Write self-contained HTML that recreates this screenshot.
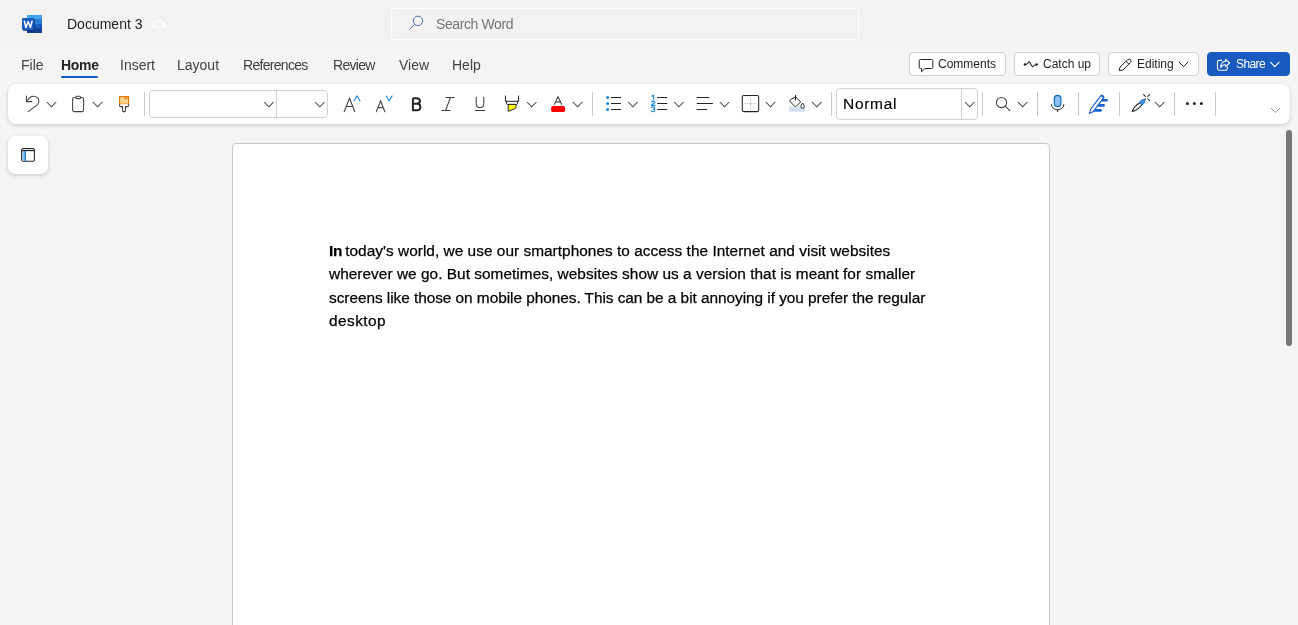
<!DOCTYPE html>
<html><head><meta charset="utf-8">
<style>
*{margin:0;padding:0;box-sizing:border-box;}
html,body{width:1298px;height:625px;overflow:hidden;background:#f5f5f5;font-family:"Liberation Sans",sans-serif;color:#242424;}
#titlebar{position:absolute;left:0;top:0;width:1298px;height:48px;background:#f3f2f1;}
#search{position:absolute;left:391px;top:8px;width:468px;height:32px;border:1px solid #fff;border-radius:3px;background:#f3f2f1;}
.t{position:absolute;white-space:nowrap;line-height:1;}
.tab{position:absolute;top:57.6px;font-size:14px;color:#424242;white-space:nowrap;line-height:1;}
.btn{position:absolute;top:52px;height:24px;border:1px solid #d1d1d1;border-radius:4px;background:#fff;}
.bt{position:absolute;top:57.8px;font-size:12px;color:#242424;white-space:nowrap;line-height:1;}
#toolbar{position:absolute;left:8px;top:84px;width:1282px;height:40px;background:#fff;border-radius:8px;box-shadow:0 2px 4px rgba(0,0,0,0.12),0 0 2px rgba(0,0,0,0.10);}
#leftbtn{position:absolute;left:8px;top:136px;width:40px;height:38px;background:#fff;border-radius:7px;box-shadow:0 2px 4px rgba(0,0,0,0.12),0 0 2px rgba(0,0,0,0.10);}
.box{position:absolute;border:1px solid #d1d1d1;border-radius:4px;background:#fff;}
#page{position:absolute;left:232px;top:143px;width:818px;height:500px;background:#fff;border:1px solid #c8c8c8;border-radius:4px 4px 0 0;}
.line{position:absolute;left:329px;font-size:15.4px;color:#000;white-space:nowrap;line-height:1;-webkit-text-stroke:0.25px #000;}
#scroll{position:absolute;left:1286px;top:130px;width:6px;height:216px;border-radius:3px;background:#797775;}
svg#ov{position:absolute;left:0;top:0;width:1298px;height:625px;}
.t,.tab,.bt,.line{will-change:transform;}
</style></head><body>
<div id="titlebar"></div>
<div id="search"></div>
<div class="t" style="left:67px;top:17px;font-size:14px;color:#242424;">Document 3</div>
<div class="t" style="left:436px;top:17.3px;font-size:14px;color:#767676;letter-spacing:-0.4px;">Search Word</div>

<div class="tab" style="left:21px;">File</div>
<div class="tab" style="left:61px;font-weight:bold;color:#242424;letter-spacing:-0.3px;">Home</div>
<div class="tab" style="left:120px;">Insert</div>
<div class="tab" style="left:177px;">Layout</div>
<div class="tab" style="left:243px;letter-spacing:-0.7px;">References</div>
<div class="tab" style="left:333px;letter-spacing:-0.7px;">Review</div>
<div class="tab" style="left:399px;">View</div>
<div class="tab" style="left:452px;">Help</div>
<div style="position:absolute;left:61.3px;top:75.6px;width:36.6px;height:2.1px;border-radius:1px;background:#185abd;"></div>

<div class="btn" style="left:909px;width:97px;"></div>
<div class="btn" style="left:1014px;width:86px;"></div>
<div class="btn" style="left:1108px;width:91px;"></div>
<div class="btn" style="left:1207px;width:83px;border-color:#185abd;background:#185abd;"></div>
<div class="bt" style="left:938px;">Comments</div>
<div class="bt" style="left:1043px;">Catch up</div>
<div class="bt" style="left:1137px;">Editing</div>
<div class="bt" style="left:1236px;color:#fff;letter-spacing:-0.6px;">Share</div>

<div id="toolbar"></div>
<div class="box" style="left:149px;top:90px;width:179px;height:28px;"></div>
<div style="position:absolute;left:276px;top:91px;width:1px;height:26px;background:#d1d1d1;"></div>
<div class="box" style="left:836px;top:88px;width:142px;height:32px;"></div>
<div style="position:absolute;left:961px;top:89px;width:1px;height:30px;background:#d1d1d1;"></div>
<div class="t" style="left:843px;top:95.8px;font-size:15.5px;color:#000;letter-spacing:0.7px;-webkit-text-stroke:0.15px #000;">Normal</div>

<div id="leftbtn"></div>
<div id="page"></div>
<div id="scroll"></div>

<div class="line" style="top:243px;letter-spacing:0.03px"><b style="letter-spacing:-0.3px;margin-right:-1.2px">In</b> today's world, we use our smartphones to access the Internet and visit websites</div>
<div class="line" style="top:266px;letter-spacing:0.035px">wherever we go. But sometimes, websites show us a version that is meant for smaller</div>
<div class="line" style="top:290px;letter-spacing:-0.045px">screens like those on mobile phones. This can be a bit annoying if you prefer the regular</div>
<div class="line" style="top:313px;letter-spacing:0.45px">desktop</div>

<svg id="ov" viewBox="0 0 1298 625">
<!-- word logo -->
<g>
 <rect x="27" y="15" width="15" height="18" rx="1.2" fill="#185abd"/>
 <rect x="27" y="15" width="15" height="4.5" fill="#41a5ee"/>
 <rect x="27" y="19.5" width="15" height="4.5" fill="#2b7cd3"/>
 <rect x="27" y="24" width="15" height="4.5" fill="#185abd"/>
 <rect x="27" y="28.5" width="15" height="4.5" fill="#103f91"/>
 <rect x="23" y="19" width="12" height="12" rx="1" fill="#0b2d6e" opacity="0.75"/>
 <rect x="22" y="18" width="12.2" height="12" rx="1" fill="#185abd"/>
 <path d="M24.2,20.6 L25.9,27.6 L28.2,21.6 L30.4,27.6 L32.2,20.6" fill="none" stroke="#fff" stroke-width="1.5" stroke-linejoin="round"/>
</g>
<!-- cloud -->
<path d="M153,27 H165 V24.6 Q165,23.6 164,23.6 H162.6 V21.6 Q162.6,20.7 161.7,20.7 H158 Q156.6,20.7 155.6,21.8 L154.2,22.8 Q153,23.4 153,24.6 Z" fill="none" stroke="#fff" stroke-width="1.2" stroke-linejoin="round"/>
<!-- search icon -->
<circle cx="418" cy="20.9" r="4.7" fill="none" stroke="#4f6bb0" stroke-width="0.95"/>
<path d="M414.7,24.3 L409.3,29.7" stroke="#4f6bb0" stroke-width="0.95"/>

<!-- comments icon -->
<path d="M920.5,59.5 H931.5 A1.3,1.3 0 0 1 932.8,60.8 V67.2 A1.3,1.3 0 0 1 931.5,68.5 H925 L921.5,71.8 V68.5 H920.5 A1.3,1.3 0 0 1 919.2,67.2 V60.8 A1.3,1.3 0 0 1 920.5,59.5 Z" fill="none" stroke="#242424" stroke-width="1"/>
<!-- catch up icon -->
<path d="M1025,64.5 C1026.5,64.5 1027.3,64.2 1028,63 C1028.8,61.5 1029.6,61.5 1030.3,63.2 C1031,65 1031.6,66.6 1032.6,66.6 C1033.6,66.6 1034,64.5 1036.6,64.5" fill="none" stroke="#242424" stroke-width="1.1"/>
<circle cx="1025" cy="64.5" r="1.3" fill="#242424"/><circle cx="1036.6" cy="64.5" r="1.3" fill="#242424"/>
<!-- pencil -->
<path d="M1119.2,70.6 L1120,67 L1127.5,59.8 A1.6,1.6 0 0 1 1130.5,62.6 L1123,70 Z M1126,61.3 L1129,64.2" fill="none" stroke="#242424" stroke-width="1"/>
<path d="M1178.8,61.8 L1183.5,66.6 L1188.2,61.8" fill="none" stroke="#242424" stroke-width="1"/>
<!-- share icon -->
<path d="M1222,60.4 H1219 A1.6,1.6 0 0 0 1217.5,62 V68.6 A1.6,1.6 0 0 0 1219.1,70.2 H1225.8 A1.6,1.6 0 0 0 1227.4,68.6 V66.6" fill="none" stroke="#fff" stroke-width="1.1"/>
<path d="M1225.6,59.4 L1229.6,63 L1225.6,66.6 V64.8 C1223.2,64.8 1221.6,65.8 1220.7,67.4 C1220.9,64.2 1222.7,61.6 1225.6,61.3 Z" fill="none" stroke="#fff" stroke-width="1.1" stroke-linejoin="round"/>
<path d="M1270.2,61.8 L1274.8,66.6 L1279.4,61.8" fill="none" stroke="#fff" stroke-width="1.1"/>

<!-- toolbar separators -->
<g fill="#c8c8c8">
 <rect x="144" y="92" width="1" height="24"/>
 <rect x="592" y="92" width="1" height="24"/>
 <rect x="831" y="92" width="1" height="24"/>
 <rect x="982" y="92" width="1" height="24"/>
 <rect x="1037" y="92" width="1" height="24"/>
 <rect x="1078" y="92" width="1" height="24"/>
 <rect x="1119" y="92" width="1" height="24"/>
 <rect x="1174" y="92" width="1" height="24"/>
 <rect x="1215" y="92" width="1" height="24"/>
</g>
<!-- chevrons -->
<g fill="none" stroke="#424242" stroke-width="1.05">
 <path d="M46.8,102 L51.5,106.8 L56.2,102"/>
 <path d="M92.9,102 L97.6,106.8 L102.3,102"/>
 <path d="M264.2,102 L268.9,106.8 L273.6,102"/>
 <path d="M315.1,102 L319.8,106.8 L324.5,102"/>
 <path d="M527,102 L531.7,106.8 L536.4,102"/>
 <path d="M572.9,102 L577.6,106.8 L582.3,102"/>
 <path d="M628.2,102 L632.9,106.8 L637.6,102"/>
 <path d="M674.2,102 L678.9,106.8 L683.6,102"/>
 <path d="M719.8,102 L724.5,106.8 L729.2,102"/>
 <path d="M765.8,102 L770.5,106.8 L775.2,102"/>
 <path d="M812.1,102 L816.8,106.8 L821.5,102"/>
 <path d="M965,102 L969.7,106.8 L974.4,102"/>
 <path d="M1017.9,102 L1022.6,106.8 L1027.3,102"/>
 <path d="M1155,102 L1159.7,106.8 L1164.4,102"/>
</g>
<path d="M1271,108 L1275.5,112.6 L1280,108" fill="none" stroke="#8a8a8a" stroke-width="0.9"/>

<!-- undo -->
<g fill="none" stroke="#424242" stroke-width="1.05" stroke-linecap="round" stroke-linejoin="round">
 <path d="M26.4,96 V101.6 H31.8"/>
 <path d="M26.9,101.2 C28.6,98.1 30.9,96.2 33.5,96.2 C36.5,96.2 38.9,98.5 38.9,101.3 C38.9,102.8 38.2,104 37.2,104.8 L28.2,111.6"/>
</g>
<!-- clipboard -->
<g fill="none" stroke="#424242" stroke-width="1.05">
 <rect x="72.6" y="97.4" width="11" height="14.2" rx="1.6"/>
 <rect x="75.6" y="96.2" width="5" height="2.4" rx="1.2" fill="#fff"/>
</g>
<!-- format painter -->
<rect x="119.6" y="96.6" width="9" height="7.6" fill="#f7d98b" stroke="#e3730b" stroke-width="1.1"/>
<path d="M125,96.8 V99.6 M127,96.8 V99.6" stroke="#e3730b" stroke-width="1.1"/>
<path d="M119.6,104.2 V105.6 Q119.6,106.6 120.6,106.6 H122.6 V111 Q122.6,111.6 123.2,111.6 H124.8 Q125.4,111.6 125.4,111 V106.6 H127.6 Q128.6,106.6 128.6,105.6 V104.2" fill="#fff" stroke="#424242" stroke-width="1.05"/>

<!-- grow / shrink font -->
<g fill="none" stroke="#424242" stroke-width="1.05" stroke-linecap="round">
 <path d="M344.2,111.8 L349.5,98.2 L354.8,111.8 M346.3,106.5 H352.7"/>
 <path d="M376.3,111.8 L380.6,101 L384.9,111.8 M378,107.6 H383.2"/>
</g>
<g fill="none" stroke="#1a86d9" stroke-width="1.1" stroke-linecap="round">
 <path d="M354,100.8 L357,96 L360,100.8"/>
 <path d="M386.3,96 L389.2,100.8 L392.1,96"/>
</g>
<!-- bold B -->
<path d="M412.9,98.3 H416.5 C418.7,98.3 419.9,99.4 419.9,101 C419.9,102.6 418.7,103.8 416.5,103.8 H412.9 M412.9,103.8 H417 C419.3,103.8 420.4,105.1 420.4,107 C420.4,108.9 419.3,110.2 417,110.2 H412.9 Z M412.9,98.3 V110.2" fill="none" stroke="#242424" stroke-width="1.95" stroke-linejoin="round"/>
<!-- italic I -->
<path d="M445.5,97.5 H454.5 M441.5,110.5 H450.5 M450.5,97.5 L445.5,110.5" fill="none" stroke="#424242" stroke-width="1.05"/>
<!-- underline U -->
<path d="M476.2,96.8 V103.5 C476.2,106 477.8,107.6 480,107.6 C482.2,107.6 483.8,106 483.8,103.5 V96.8 M474.8,110.4 H485.2" fill="none" stroke="#424242" stroke-width="1.05"/>
<!-- highlighter -->
<g stroke="#242424" stroke-width="1" fill="none" stroke-linejoin="round">
 <path d="M505.4,95.6 V101.3 H518.6 V95.6"/>
 <path d="M506.4,101.3 V103.3 Q506.4,104.4 507.5,104.4 H516.5 Q517.6,104.4 517.6,103.3 V101.3"/>
 <path d="M508.2,104.4 V111.4 L515,108.6 Q515.8,108.2 515.9,107.4 L516.2,104.4 Z" fill="#ffff00"/>
</g>
<!-- font color -->
<path d="M554.2,104.8 L558,96.6 L561.8,104.8 M555.5,102 H560.5" fill="none" stroke="#242424" stroke-width="1"/>
<rect x="551.2" y="106" width="13.8" height="6" rx="1.5" fill="#ff0000"/>

<!-- bullets -->
<g fill="#1a86d9">
 <circle cx="607.6" cy="97.5" r="1.5"/><circle cx="607.6" cy="103.4" r="1.5"/><circle cx="607.6" cy="109.4" r="1.5"/>
</g>
<g stroke="#242424" stroke-width="1.05">
 <path d="M611,97.5 H621 M611,103.4 H621 M611,109.4 H621"/>
 <path d="M657.2,97.5 H667.2 M657.2,103.4 H667.2 M657.2,109.4 H667.2"/>
 <path d="M696.7,97.5 H709.4 M696.7,103.4 H712.9 M696.7,109.4 H707.1"/>
</g>
<g fill="none" stroke="#1a86d9" stroke-width="1.15" stroke-linejoin="round" stroke-linecap="round">
 <path d="M651.8,96.2 L653.6,95.3 V99.4"/>
 <path d="M651.5,102 C651.7,101.4 652.4,101.1 653.2,101.1 C654.1,101.1 654.9,101.6 654.9,102.3 C654.9,103.5 651.5,104 651.5,105.3 H655.1"/>
 <path d="M651.5,107.5 C651.8,107.1 652.4,106.9 653.1,106.9 C654.1,106.9 654.8,107.4 654.8,108.1 C654.8,108.8 654.1,109.2 653.2,109.2 C654.2,109.2 654.9,109.7 654.9,110.5 C654.9,111.3 654.1,111.7 653.1,111.7 C652.3,111.7 651.7,111.4 651.4,110.9"/>
</g>
<!-- borders -->
<rect x="742.3" y="95.4" width="16.4" height="16.2" rx="1.5" fill="none" stroke="#242424" stroke-width="1.05"/>
<path d="M750.5,97.5 V110 M744.5,103.5 H757" stroke="#8a8a8a" stroke-width="0.7" stroke-dasharray="1,1.2"/>
<!-- shading -->
<rect x="789" y="106.5" width="16" height="5.2" fill="#d5e0f5"/>
<g fill="none" stroke="#242424" stroke-width="1" stroke-linejoin="round">
 <path d="M795.5,96.8 L800.6,101.9 L796.6,105.9 Q795.5,107 794.4,105.9 L790.4,101.9 Q789.3,100.8 790.4,99.7 Z" fill="#fff"/>
 <path d="M795.5,95 V100.5"/>
 <path d="M802.6,103 C801.8,104.4 800.9,105.3 800.9,106.6 A1.7,1.7 0 0 0 804.3,106.6 C804.3,105.3 803.4,104.4 802.6,103 Z" fill="#fff"/>
</g>

<!-- find -->
<g fill="none" stroke="#424242" stroke-width="1.05" stroke-linecap="round">
 <circle cx="1001.5" cy="102.5" r="5.1"/>
 <path d="M1005.2,106.2 L1009.8,110.6"/>
</g>
<!-- mic -->
<rect x="1054.3" y="95.3" width="6.6" height="11.3" rx="3.3" fill="#8cc0f0" stroke="#0f6cbd" stroke-width="1.2"/>
<path d="M1051.3,104.2 C1051.6,107.6 1054.3,109.8 1057.6,109.8 C1060.9,109.8 1063.6,107.6 1063.9,104.2" fill="none" stroke="#242424" stroke-width="1"/>
<path d="M1057.6,109.8 V112" stroke="#242424" stroke-width="1"/>
<!-- editor -->
<g stroke="#1c5fd0" stroke-width="2.6" stroke-linecap="round">
 <path d="M1099.8,100.2 H1106.6 M1096.6,105.4 H1103.6 M1093.4,110.4 H1100.6"/>
</g>
<path d="M1089.4,113.6 L1090.6,109.4 L1101.2,95.1 L1104,97.2 L1093.4,111.4 Z" fill="#fff" stroke="#1c5fd0" stroke-width="1.1" stroke-linejoin="round"/>
<path d="M1101.8,95.6 L1103.6,96.9" stroke="#1c5fd0" stroke-width="2"/>
<!-- designer pen -->
<g fill="none" stroke="#242424" stroke-width="1.05" stroke-linecap="round">
 <path d="M1143.6,94.6 L1145.4,96.4 M1147.8,98.8 L1149.6,100.6 M1149.6,94.6 L1147.8,96.4 M1145.4,98.8 L1143.6,100.6"/>
 <path d="M1132.3,111.6 C1133.2,108.6 1136.5,104.6 1140,102.8 L1141.8,104.6 C1140,108 1135.4,111 1132.3,111.6 Z" fill="#fff"/>
</g>
<path d="M1139.4,102.4 C1140.2,100.6 1142.4,99.4 1145.1,99.3 C1145,101.9 1143.9,104.2 1142.1,105 Z" fill="#3d97e0" stroke="#1a6fc0" stroke-width="0.9" stroke-linejoin="round"/>
<!-- more -->
<g fill="#242424"><circle cx="1187.4" cy="103.5" r="1.5"/><circle cx="1194.4" cy="103.5" r="1.5"/><circle cx="1201.4" cy="103.5" r="1.5"/></g>

<!-- left panel icon -->
<rect x="21.6" y="148.5" width="12.8" height="12.8" rx="1.6" fill="#fff" stroke="#242424" stroke-width="1.05"/>
<rect x="22.2" y="151" width="3.2" height="9.8" fill="#8cc0f0"/>
<path d="M21.8,150.5 H34.2" stroke="#242424" stroke-width="1.3"/>
<path d="M25.3,150.8 V161" stroke="#1a73c8" stroke-width="1.2"/>
</svg>
</body></html>
